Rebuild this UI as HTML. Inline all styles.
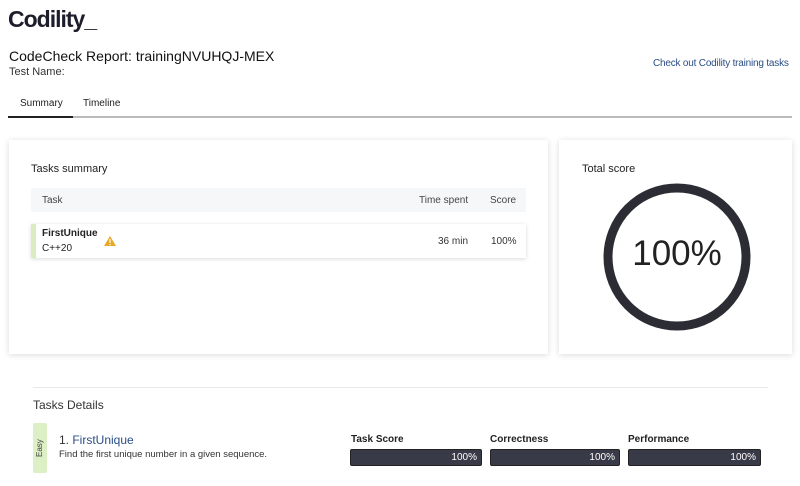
<!DOCTYPE html>
<html><head><style>
body{margin:0;width:800px;height:486px;background:#fff;font-family:"Liberation Sans",sans-serif;color:#222;position:relative;overflow:hidden}
.a{position:absolute}
.card{position:absolute;background:#fff;box-shadow:0 1px 6px rgba(0,0,0,.15)}
.bar{position:absolute;top:449px;height:17px;background:#393a47;border-radius:2px;color:#fff;font-size:10px;text-align:right;line-height:15px;padding-right:4px;box-sizing:border-box;border:1px solid #222}
.lbl{position:absolute;top:434px;font-size:10px;font-weight:bold;color:#222}
</style></head><body>
<div class="a" style="left:8px;top:6px;font-size:23px;font-weight:bold;color:#1d1d2b;letter-spacing:-1px">Codility_</div>
<div class="a" style="left:9px;top:48px;font-size:14px;color:#111">CodeCheck Report: trainingNVUHQJ-MEX</div>
<div class="a" style="left:9px;top:66px;font-size:11px;color:#333">Test Name:</div>
<div class="a" style="left:653px;top:58px;font-size:10px;color:#2a4e86;letter-spacing:-0.2px">Check out Codility training tasks</div>
<div class="a" style="left:20px;top:98px;font-size:10px;color:#222">Summary</div>
<div class="a" style="left:83px;top:98px;font-size:10px;color:#222">Timeline</div>
<div class="a" style="left:8px;top:116px;width:784px;height:2px;background:#bbb"></div>
<div class="a" style="left:8px;top:116px;width:65px;height:2px;background:#222"></div>

<div class="card" style="left:9px;top:140px;width:539px;height:214px"></div>
<div class="a" style="left:31px;top:163px;font-size:11px;color:#222">Tasks summary</div>
<div class="a" style="left:31px;top:188px;width:495px;height:24px;background:#f6f7f9"></div>
<div class="a" style="left:42px;top:195px;font-size:10px;color:#444">Task</div>
<div class="a" style="left:419px;top:195px;font-size:10px;color:#444">Time spent</div>
<div class="a" style="left:490px;top:195px;font-size:10px;color:#444">Score</div>
<div class="card" style="left:31px;top:224px;width:495px;height:34px;border-left:5px solid #d9ecc2;box-sizing:border-box;box-shadow:0 1px 4px rgba(0,0,0,.15)"></div>
<div class="a" style="left:42px;top:228px;font-size:10px;font-weight:bold;color:#222">FirstUnique</div>
<div class="a" style="left:42px;top:243px;font-size:10px;color:#222">C++20</div>
<svg class="a" style="left:104px;top:236px" width="12" height="10"><path d="M6 0L12 10H0Z" fill="#e9a823"/><rect x="5.4" y="3" width="1.2" height="4" fill="#fff"/><rect x="5.4" y="8" width="1.2" height="1.2" fill="#fff"/></svg>
<div class="a" style="left:438px;top:236px;font-size:10px;color:#333">36 min</div>
<div class="a" style="left:491px;top:236px;font-size:10px;color:#333">100%</div>

<div class="card" style="left:559px;top:140px;width:233px;height:214px"></div>
<div class="a" style="left:582px;top:163px;font-size:11px;color:#222">Total score</div>
<svg class="a" style="left:599px;top:179px" width="156" height="156"><circle cx="78" cy="78" r="69" fill="none" stroke="#2c2c35" stroke-width="9"/></svg>
<div class="a" style="left:599px;top:234px;width:156px;text-align:center;font-size:35px;color:#222">100%</div>

<div class="a" style="left:33px;top:387px;width:735px;height:1px;background:#e8e8e8"></div>
<div class="a" style="left:33px;top:398px;font-size:12px;color:#333">Tasks Details</div>
<div class="a" style="left:33px;top:423px;width:14px;height:50px;background:#dcefc5;border-radius:2px"></div>
<div class="a" style="left:33px;top:423px;width:14px;height:50px;font-size:8px;color:#444;writing-mode:vertical-rl;transform:rotate(180deg);text-align:center;line-height:14px">Easy</div>
<div class="a" style="left:59px;top:433px;font-size:12px;color:#333">1. <span style="color:#2a4e86">FirstUnique</span></div>
<div class="a" style="left:59px;top:449px;font-size:9.5px;color:#333">Find the first unique number in a given sequence.</div>
<div class="lbl" style="left:351px">Task Score</div>
<div class="lbl" style="left:490px">Correctness</div>
<div class="lbl" style="left:628px">Performance</div>
<div class="bar" style="left:350px;width:132px">100%</div>
<div class="bar" style="left:490px;width:130px">100%</div>
<div class="bar" style="left:628px;width:133px">100%</div>
</body></html>
